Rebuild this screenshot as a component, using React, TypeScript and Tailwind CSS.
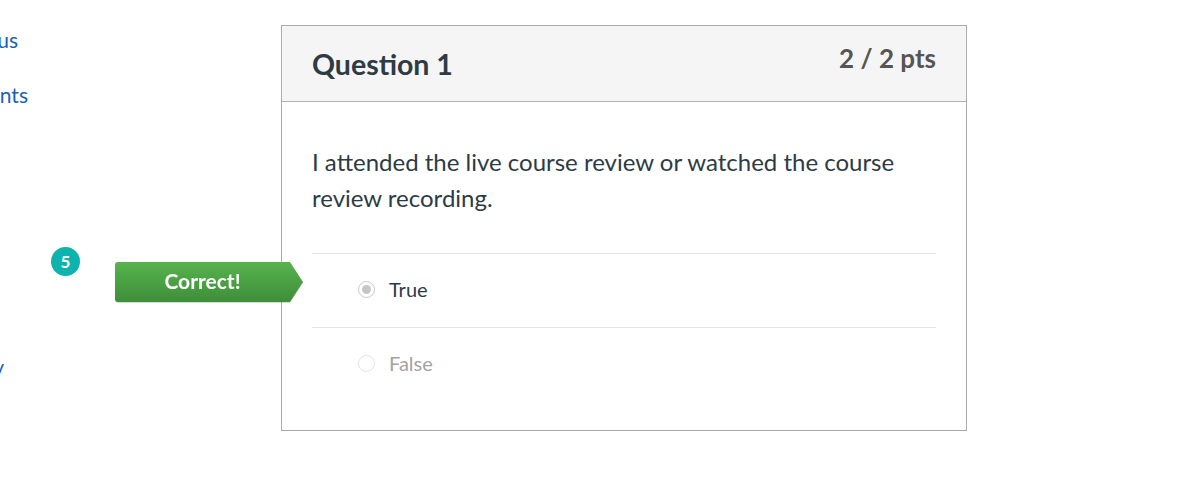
const answers = [
  { label: "True", selected: true },
  { label: "False", selected: false },
];

function Radio({ selected }: { selected: boolean }) {
  return selected ? (
    <span className="flex h-[17px] w-[17px] items-center justify-center rounded-full border border-[#c9c9c9] bg-white">
      <span className="h-[9px] w-[9px] rounded-full bg-[#c6c6c6]" />
    </span>
  ) : (
    <span className="h-[17px] w-[17px] rounded-full border border-[#e2e2e2] bg-white" />
  );
}

function CorrectFlag() {
  return (
    <div className="absolute left-[-197px] top-[8px] h-[40px] w-[188px] [filter:drop-shadow(0_1px_0_rgba(0,0,0,0.15))]">
      <div className="flex h-full w-full items-center rounded-l-[3px] bg-gradient-to-b from-[#56b44d] to-[#3f8e3a] pr-[13px] [clip-path:polygon(0_0,175px_0,100%_50%,175px_100%,0_100%)]">
        <span className="w-full pb-[3px] text-center text-[21px] font-bold text-white">Correct!</span>
      </div>
    </div>
  );
}

export default function App() {
  return (
    <div className="relative flex h-[478px] w-[1189px] overflow-hidden bg-white font-['Lato','Liberation_Sans',sans-serif] text-[#2d3b45]">
      {/* course nav, cut off by the window edge */}
      <nav className="flex w-[60px] flex-col text-[21px] leading-[28px] text-[#1a5fb4]">
        <div className="mt-[26px] flex w-[18px] justify-end overflow-hidden whitespace-nowrap">Syllabus</div>
        <div className="mt-[27px] flex w-[28px] justify-end overflow-hidden whitespace-nowrap">Assignments</div>
        <div className="mt-[244px] flex w-[4px] justify-end overflow-hidden whitespace-nowrap">Library</div>
      </nav>

      <span className="absolute left-[51px] top-[247px] flex h-[29px] w-[29px] items-center justify-center rounded-full bg-[#0db3ad] text-[17px] font-bold text-white">
        5
      </span>

      <section className="ml-[221px] mt-[25px] h-[406px] w-[686px] border border-[#ababab]">
        <header className="flex h-[76px] justify-between border-b border-[#b4b4b4] bg-[#f5f5f5] px-[30px]">
          <h2 className="pt-[17px] text-[28.5px] font-bold text-[#2d3b45]">Question 1</h2>
          <span className="pt-[13px] text-[26px] font-bold text-[#555555]">2 / 2 pts</span>
        </header>
        <div className="px-[30px] pt-[42px]">
          <p className="text-[24px] leading-[36px]">
            I attended the live course review or watched the course review recording.
          </p>
          <ul className="mt-[37px]">
            {answers.map((a) => (
              <li
                key={a.label}
                className="relative flex h-[74px] items-center gap-[14px] border-t border-[#e4e4e4] pb-[3px] pl-[46px]"
              >
                {a.selected && <CorrectFlag />}
                <Radio selected={a.selected} />
                <span className={`text-[20px] ${a.selected ? "text-[#2d3b45]" : "text-[#a3a3a3]"}`}>
                  {a.label}
                </span>
              </li>
            ))}
          </ul>
        </div>
      </section>
    </div>
  );
}
